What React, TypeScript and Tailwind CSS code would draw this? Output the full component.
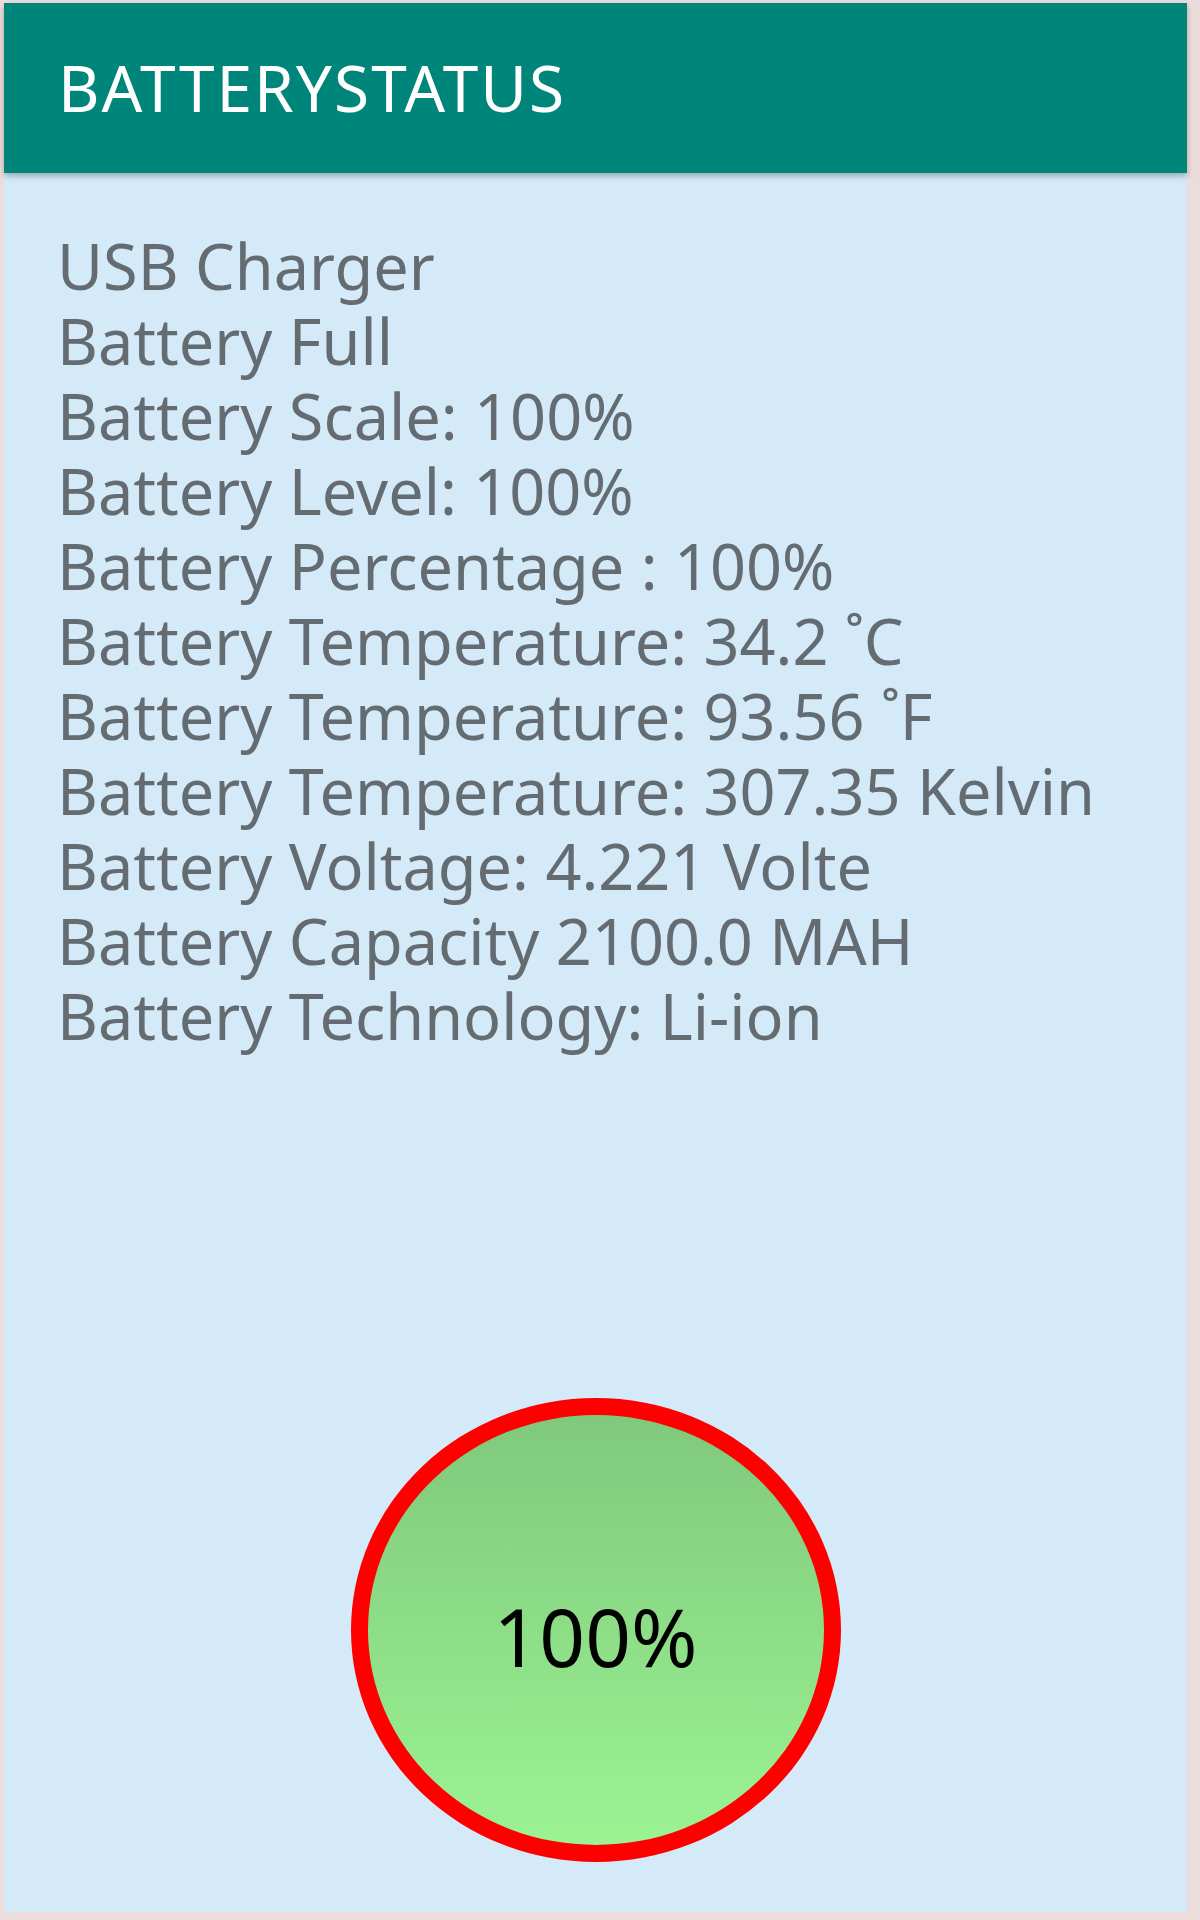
const lines = [
  "USB Charger",
  "Battery Full",
  "Battery Scale: 100%",
  "Battery Level: 100%",
  "Battery Percentage : 100%",
  "Battery Temperature: 34.2 ˚C",
  "Battery Temperature: 93.56 ˚F",
  "Battery Temperature: 307.35 Kelvin",
  "Battery Voltage: 4.221 Volte",
  "Battery Capacity 2100.0 MAH",
  "Battery Technology: Li-ion",
];

export default function App() {
  return (
    <div
      className="h-[1920px] w-[1200px] bg-[#eddcdc] pt-[3px] pb-[8px] pl-[4px] pr-[13px]"
      style={{ fontFamily: '"Noto Sans", "Open Sans", sans-serif' }}
    >
      <div className="flex h-full flex-col bg-[#d5eaf8]">
        {/* toolbar */}
        <div className="relative z-10 flex h-[170px] shrink-0 items-center bg-[#00857a] pl-[54px] shadow-[0_3px_6px_rgba(0,0,0,0.28)]">
          <h1 className="text-[64px] leading-none tracking-[2px] text-white">BATTERYSTATUS</h1>
        </div>

        <div className="flex flex-1 flex-col pt-[55px]">
          <div className="pl-[53px] text-[63px] leading-[75px] text-[#646c72]">
            {lines.map((line) => (
              <div key={line} className="whitespace-nowrap">
                {line}
              </div>
            ))}
          </div>

          <div className="mt-[345px] flex h-[464px] w-[490px] items-center justify-center self-center rounded-[50%] border-[17px] border-[#ff0000] bg-linear-to-b from-[#80c97c] to-[#9bf393]">
            <span className="pt-[12px] text-[80px] leading-none text-black">100%</span>
          </div>
        </div>
      </div>
    </div>
  );
}
